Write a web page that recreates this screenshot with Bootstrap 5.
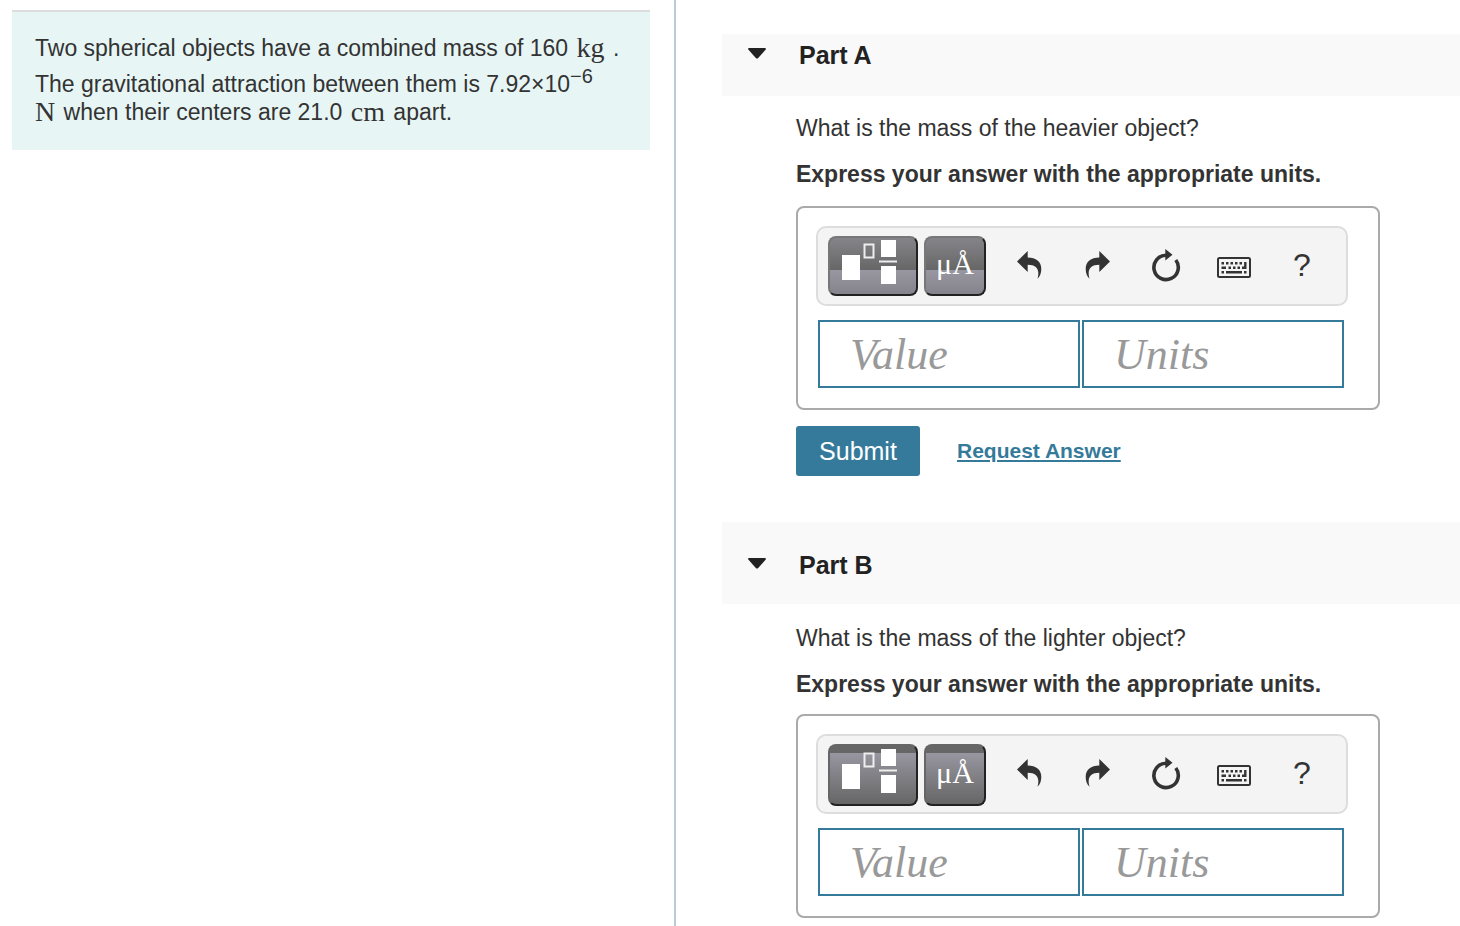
<!DOCTYPE html>
<html lang="en">
<head>
<meta charset="utf-8">
<meta name="viewport" content="width=device-width, initial-scale=1">
<title>Gravitational attraction</title>
<link href="https://cdn.jsdelivr.net/npm/bootstrap@5.3.0/dist/css/bootstrap.min.css" rel="stylesheet">
<style>
  body { font-family: "Liberation Sans", Arial, sans-serif; font-size: 23px; line-height: 28px; color: #333; background: #fff; }
  .problem-pane { flex: 0 0 46.3%; border-right: 2px solid #bccad8; padding: 10px 24px 0 12px; }
  .statement { background: #e7f6f5; border-top: 2px solid #ddd; padding: 22px 12px 24px 23px; }
  .unit { font-family: "Liberation Serif", serif; font-size: 28px; line-height: 20px; vertical-align: -1px; margin-right: 2px; }
  .text-unit { margin-left: 2px; }
  .statement sup { font-size: 20px; line-height: 28px; top: 0; vertical-align: 9px; }
  .parts-pane { padding: 34px 0 8px 46px; }
  .part-head { background: #f9f9f9; color: #222; padding: 0 26px 20px; }
  .part-head h2 { font-size: 25px; line-height: 42px; font-weight: 700; padding-left: 33px; }
  .toggle { width: 18px; height: 38px; }
  .part-gap { margin-top: 46px; }
  .part-gap .part-head { padding-top: 22px; padding-bottom: 18px; }
  .part-body { padding: 18px 16px 0 74px; }
  .part-body p { margin-bottom: 18px; }
  .part-gap .part-body { padding-top: 20px; }
  .part-gap .part-body p + p { margin-bottom: 16px; }
  .answer-box { max-width: 584px; border: 2px solid #aaa; border-radius: 8px; padding: 18px 30px 20px 18px; }
  .tools { background: #f4f4f4; border: 2px solid #ddd; border-radius: 10px; padding: 8px; height: 80px; }
  .dark-key { height: 60px; border: 2px solid; border-color: #777 #222 #222 #777; border-radius: 8px; color: #fff; background: linear-gradient(#858489, #666 58%, #9896a0 58%, #85848c); font-family: "Liberation Serif", serif; font-size: 30px; line-height: 52px; padding: 0; }
  .part-gap .dark-key { height: 62px; background: linear-gradient(#666 12%, #9896a0 12%, #666); border-color: #666 #222 #222 #666; }
  .template-key { width: 90px; margin-left: 2px; }
  .units-key { width: 62px; margin-left: 6px; margin-right: 10px; padding-bottom: 4px; }
  .tool { flex: 0 1 68px; height: 60px; border: 0; background: none; color: #333; padding: 0 0 2px; font-size: 32px; line-height: 56px; }
  .dark-key svg, .tool svg, .toggle svg { display: block; margin: auto; }
  .entries { gap: 2px; margin: 14px 4px 0 2px; }
  .entry { flex: 1 1 0; min-width: 0; height: 68px; border: 2px solid #357a9a; border-radius: 0; padding: 0 30px; font: italic 44px/64px "Liberation Serif", serif; color: #333; background: #fff; }
  .entry::placeholder { color: #999; opacity: 1; }
  .submit-btn { background: #357a9a; color: #fff; border: 0; border-radius: 3px; width: 124px; height: 50px; font-size: 25px; line-height: 50px; padding: 0; }
  .request { color: #357a9a; font-size: 21px; font-weight: 700; margin-left: 37px; }
</style>
</head>
<body>
<svg class="d-none" aria-hidden="true">
  <symbol id="down" viewBox="0 0 18 11"><path d="M1 0h16q1.500.5.500 1.800L10.200 10q-1.200 1-2.400 0L.5 1.800Q-.5.500 1 0z" fill="#222"/></symbol>
  <symbol id="template" viewBox="0 0 86 56"><path d="M12 17h18v25H12zM51 2h15v17H51zM51 28h15v18H51z" fill="#fff"/><path d="M34.500 6.500h9v13h-9zM49 23.500h18" fill="none" stroke="#eee" stroke-width="2"/></symbol>
  <symbol id="undo" viewBox="0 0 25 28"><path d="M0 10.500 10.700 0v6.500C19 6.500 24.300 10.500 24.300 18c0 4-1.200 7.300-3.800 9.800C23 19 20 13.700 10.700 13.700v7.300z" fill="#333"/></symbol>
  <symbol id="reset" viewBox="0 0 30 34"><path d="M15 7.200A12.200 12.200 0 1 0 24.800 12" fill="none" stroke="#333" stroke-width="3.600"/><path d="M14.300 1l7.200 5.800-7.200 5.700z" fill="#333"/></symbol>
  <symbol id="keyboard" viewBox="0 0 34 21"><rect x="1" y="1" width="32" height="19" rx="1.500" fill="none" stroke="#333" stroke-width="2"/><path d="M4.500 6.200H7M9 6.200h2.500M13.500 6.200H16M18 6.200h2.500M22.500 6.200H25M4.500 10.800H9M11.500 10.800H14M16 10.800h2.500M20.500 10.800H23M25 10.800h4.500M4.500 15.300H7M9 15.300h16M27 15.300h2.500M28.300 5v7" fill="none" stroke="#333" stroke-width="2.400"/></symbol>
</svg>
<div class="d-flex min-vh-100">
  <aside class="problem-pane">
    <div class="statement">Two spherical objects have a combined mass of 160 <span class="unit text-unit">kg</span> .<br>The gravitational attraction between them is 7.92×10<sup>−6</sup><br><span class="unit">N</span> when their centers are 21.0 <span class="unit text-unit">cm</span> apart.</div>
  </aside>
  <main class="parts-pane flex-grow-1">
    <section>
      <header class="part-head d-flex align-items-start">
        <button type="button" class="toggle btn p-0 border-0 d-flex align-items-center" aria-label="Collapse Part A"><svg width="18" height="11"><use href="#down"/></svg></button>
        <h2 class="mb-0">Part A</h2>
      </header>
      <div class="part-body">
        <p>What is the mass of the heavier object?</p>
        <p class="fw-bold">Express your answer with the appropriate units.</p>
        <div class="answer-box">
          <div class="tools d-flex" role="toolbar" aria-label="Part A tools">
            <button type="button" class="dark-key template-key" aria-label="Templates"><svg width="86" height="56"><use href="#template"/></svg></button>
            <button type="button" class="dark-key units-key">μÅ</button>
            <button type="button" class="tool" aria-label="Undo"><svg width="25" height="28"><use href="#undo"/></svg></button>
            <button type="button" class="tool" aria-label="Redo"><svg width="25" height="28"><use href="#undo" transform="matrix(-1 0 0 1 25 0)"/></svg></button>
            <button type="button" class="tool" aria-label="Reset"><svg width="30" height="34"><use href="#reset"/></svg></button>
            <button type="button" class="tool pt-1" aria-label="Keyboard"><svg width="34" height="21"><use href="#keyboard"/></svg></button>
            <button type="button" class="tool" aria-label="Help">?</button>
          </div>
          <div class="entries d-flex">
            <input class="entry" type="text" placeholder="Value" aria-label="Part A value">
            <input class="entry" type="text" placeholder="Units" aria-label="Part A units">
          </div>
        </div>
        <div class="d-flex align-items-center mt-3">
          <button type="submit" class="submit-btn">Submit</button>
          <a href="#" class="request">Request Answer</a>
        </div>
      </div>
    </section>
    <section class="part-gap">
      <header class="part-head d-flex align-items-start">
        <button type="button" class="toggle btn p-0 border-0 d-flex align-items-center" aria-label="Collapse Part B"><svg width="18" height="11"><use href="#down"/></svg></button>
        <h2 class="mb-0">Part B</h2>
      </header>
      <div class="part-body">
        <p>What is the mass of the lighter object?</p>
        <p class="fw-bold">Express your answer with the appropriate units.</p>
        <div class="answer-box">
          <div class="tools d-flex" role="toolbar" aria-label="Part B tools">
            <button type="button" class="dark-key template-key" aria-label="Templates"><svg width="86" height="56"><use href="#template"/></svg></button>
            <button type="button" class="dark-key units-key">μÅ</button>
            <button type="button" class="tool" aria-label="Undo"><svg width="25" height="28"><use href="#undo"/></svg></button>
            <button type="button" class="tool" aria-label="Redo"><svg width="25" height="28"><use href="#undo" transform="matrix(-1 0 0 1 25 0)"/></svg></button>
            <button type="button" class="tool" aria-label="Reset"><svg width="30" height="34"><use href="#reset"/></svg></button>
            <button type="button" class="tool pt-1" aria-label="Keyboard"><svg width="34" height="21"><use href="#keyboard"/></svg></button>
            <button type="button" class="tool" aria-label="Help">?</button>
          </div>
          <div class="entries d-flex">
            <input class="entry" type="text" placeholder="Value" aria-label="Part B value">
            <input class="entry" type="text" placeholder="Units" aria-label="Part B units">
          </div>
        </div>
      </div>
    </section>
  </main>
</div>
<script src="https://cdn.jsdelivr.net/npm/bootstrap@5.3.0/dist/js/bootstrap.bundle.min.js"></script>
</body>
</html>
